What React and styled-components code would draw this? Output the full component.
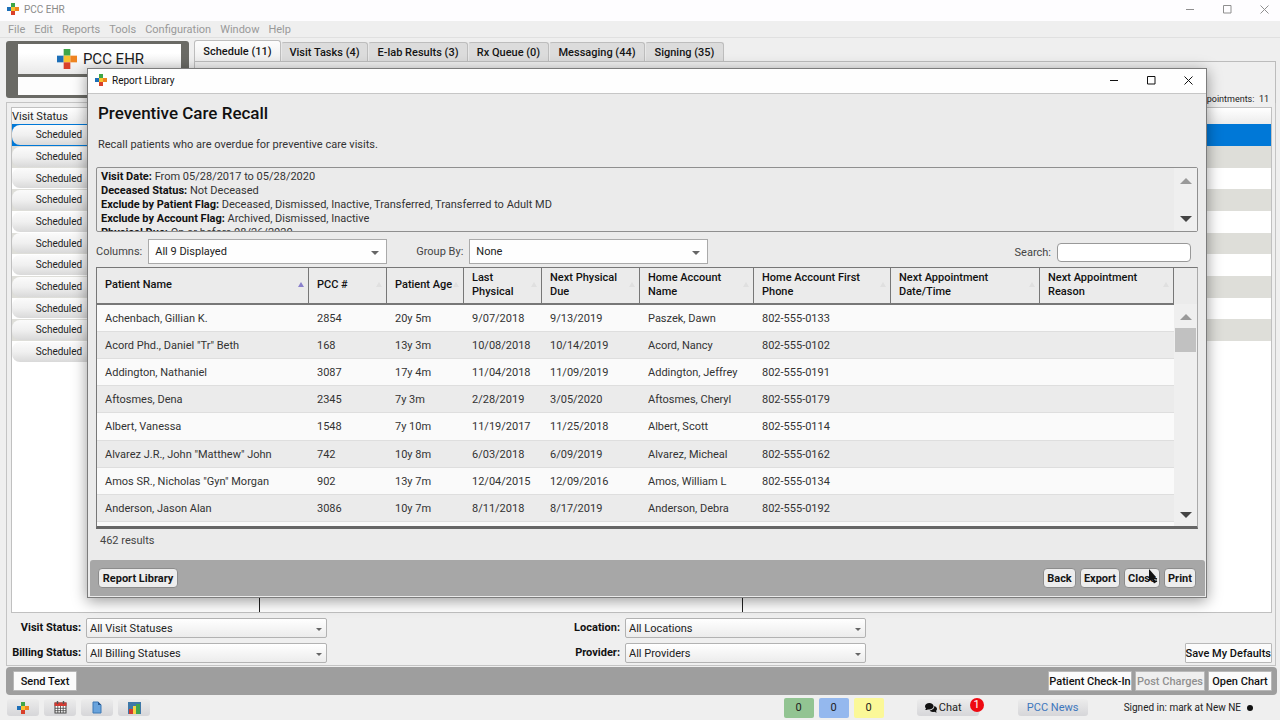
import React from "react";
import styled, { createGlobalStyle } from "styled-components";

const Global = createGlobalStyle`
  * { box-sizing: border-box; }
  body { margin: 0; background: #efefef; }
  body, button, input, select { font-family: Roboto, "Liberation Sans", sans-serif; font-size: 11px; color: #222; }
  button { cursor: default; }
  h1, p, dl, dt, dd { margin: 0; font-weight: inherit; }
`;

/* ---------- main window ---------- */
const Desktop = styled.div`
  position: relative;
  min-height: 100vh;
  display: flex;
  flex-direction: column;
  background: #efefef;
  overflow: hidden;
`;
const TitleBar = styled.header`
  display: flex;
  align-items: center;
  height: 21px;
  padding: 0 11px 3px 7px;
  gap: 5px;
  background: #fefdff;
  font-size: 10px;
  color: #8a8a8a;
`;
const WindowControls = styled.div`
  display: flex;
  align-items: center;
  gap: ${(p) => p.$gap}px;
  margin-left: auto;
`;
const ControlButton = styled.button`
  display: flex;
  padding: 0;
  border: 0;
  background: none;
  color: ${(p) => (p.$dim ? "#8f8f8f" : "#111")};
`;
const MenuBar = styled.nav`
  display: flex;
  align-items: flex-end;
  height: 17px;
  padding-left: 8px;
  gap: 9px;
  border-bottom: 1px solid #e0e0e0;
`;
const MenuItem = styled.button`
  padding: 0;
  border: 0;
  background: none;
  line-height: 14px;
  color: #999;
`;
const HeaderRow = styled.div`
  display: flex;
  height: 65px;
  padding: 0 4px 0 6px;
`;
const BrandColumn = styled.div`
  width: 188px;
  padding-top: 3px;
  border-bottom: 1px solid #c4c4c4;
`;
const BrandBox = styled.div`
  display: flex;
  flex-direction: column;
  gap: 3px;
  width: 183px;
  height: 57px;
  padding: 3px 8px 3px 12px;
  border-radius: 3px;
  background: #6a6a65;
`;
const BrandName = styled.div`
  display: flex;
  align-items: center;
  justify-content: center;
  gap: 6px;
  height: 30px;
  padding-left: 2px;
  font-size: 15px;
  color: #1c1c1c;
  background: linear-gradient(#fff 30%, #e9e9e9);
`;
const BrandField = styled.input`
  width: 100%;
  height: 18px;
  padding: 0 4px;
  border: 0;
  background: #fdfdfd;
`;
const TabColumn = styled.div`
  flex: 1;
  display: flex;
  flex-direction: column;
`;
const TabRow = styled.div`
  display: flex;
  align-items: flex-end;
  height: 23px;
`;
const Tab = styled.button`
  width: ${(p) => p.$width}px;
  height: ${(p) => (p.$active ? 21 : 19)}px;
  padding: 0;
  border: 1px solid #bdbdbd;
  border-bottom: 0;
  border-left-color: ${(p) => (p.$active ? "#bdbdbd" : "#e8e8e8")};
  border-radius: 3px 3px 0 0;
  background: ${(p) => (p.$active ? "linear-gradient(#fdfdfd, #efefef)" : "#dcdcdc")};
  font-weight: 500;
  color: #151515;
`;
const TabPane = styled.div`
  flex: 1;
  display: flex;
  align-items: flex-end;
  justify-content: flex-end;
  padding: 0 6px 0 0;
  border: 1px solid #bcbcbc;
  border-width: 1px 1px 0 1px;
  font-size: 9px;
  line-height: 8px;
  white-space: pre;
`;
const Frame = styled.main`
  flex: 1;
  display: flex;
  flex-direction: column;
  margin: 0 4px 0 6px;
  padding: 4px 3px 0 4px;
  border: 1px solid #c4c4c4;
  border-top: 0;
`;
const SchedulePanel = styled.div`
  flex: 1;
  display: flex;
  flex-direction: column;
  border: 1px solid #c0c0c0;
  background: #fff;
`;
const ScheduleTable = styled.table`
  width: 100%;
  border-collapse: collapse;
  th {
    height: 16px;
    padding: 0;
    text-align: left;
    font-size: 11px;
    font-weight: 400;
    line-height: 15px;
    background: linear-gradient(#fff, #ececec);
  }
  td { padding: 0 0 1px; height: 21px; }
  tbody tr:nth-child(3n + 1) td, tbody tr:nth-child(3n + 2) td { height: 22px; }
  tbody tr:nth-child(even) { background: #deded9; }
  tbody tr:first-child { background: #0078d7; }
`;
const StatusButton = styled.button`
  display: block;
  width: 94px;
  height: 20px;
  padding: 0;
  border: 0;
  border-radius: 8px 0 0 8px;
  background: linear-gradient(#fbfbfb, #f0f0f0 50%, #d9d9d9);
  font-size: 10px;
`;
const ScheduleColumns = styled.div`
  flex: 1;
  display: grid;
  grid-template-columns: 248px 483px 1fr;
  span { border-right: 1px solid #222; }
  span:last-child { border: 0; }
`;
const FilterGrid = styled.form`
  display: grid;
  grid-template-columns: 70px 241px 288px 241px 1fr;
  align-items: center;
  column-gap: 5px;
  row-gap: 5px;
  padding: 5px 0 2px;
`;
const FilterLabel = styled.label`
  text-align: right;
  font-weight: 700;
  line-height: 14px;
  color: #111;
  white-space: nowrap;
`;
const SelectBox = styled.span`
  position: relative;
  display: block;
  width: ${(p) => (p.$wide ? "239px" : "auto")};
  &::after {
    content: "";
    position: absolute;
    right: ${(p) => (p.$wide ? 8 : 5)}px;
    top: 50%;
    border: solid transparent;
    border-width: ${(p) => (p.$wide ? "4px 4px 0" : "3px 3px 0")};
    border-top-color: #666;
    pointer-events: none;
  }
`;
const Select = styled.select`
  display: block;
  appearance: none;
  width: 100%;
  height: 20px;
  padding: 0 20px 0 3px;
  border: 1px solid #b2b2b2;
  border-radius: 2px;
  background: linear-gradient(#fff, #ececec);
`;
const DialogSelect = styled(Select)`
  height: 25px;
  padding-left: 6px;
  border-radius: 0;
  border-color: #aaa;
  background: #fefefe;
`;
const FlatButton = styled.button`
  justify-self: end;
  min-width: ${(p) => p.$width}px;
  height: 20px;
  padding: 0;
  border: 1px solid #b8b8b8;
  border-radius: 1px;
  background: #fbfbfb;
  font-weight: 500;
  color: #111;
  white-space: nowrap;
  &:disabled { color: #909090; background: #efefef; }
`;
const ActionBar = styled.div`
  display: flex;
  align-items: center;
  gap: 3px;
  height: 28px;
  margin: 1px 3px 0 6px;
  padding: 0 5px 0 7px;
  border-radius: 4px;
  background: #9e9e9e;
`;
const Spacer = styled.span`
  flex: 1;
`;
const StatusBar = styled.footer`
  display: flex;
  align-items: center;
  height: 25px;
  padding: 0 27px 0 7px;
  gap: 5px;
`;
const ToolButton = styled.button`
  display: flex;
  align-items: center;
  justify-content: center;
  gap: 2px;
  width: ${(p) => p.$width}px;
  height: 17px;
  padding: 0;
  border: 0;
  border-radius: 3px;
  background: linear-gradient(#ececec, #d6d6d9);
  color: ${(p) => p.$color || "#222"};
`;
const Counter = styled.button`
  width: 30px;
  height: 20px;
  padding: 0;
  border: 0;
  border-radius: 2px;
  background: ${(p) => p.$color};
`;
const ChatSlot = styled.div`
  position: relative;
  margin: 0 34px 0 28px;
`;
const ChatButton = styled(ToolButton)`
  padding-right: 9px;
`;
const Badge = styled.span`
  position: absolute;
  right: -5px;
  top: -1px;
  width: 14px;
  height: 14px;
  border-radius: 7px;
  background: #ee0a12;
  color: #fff;
  line-height: 14px;
  text-align: center;
`;
const SignedIn = styled.span`
  display: flex;
  align-items: center;
  gap: 6px;
  margin-left: 31px;
  font-size: 10px;
  white-space: nowrap;
`;
const OnlineDot = styled.span`
  width: 6px;
  height: 6px;
  border-radius: 3px;
  background: #111;
`;

/* ---------- report window ---------- */
const ReportWindow = styled.section`
  position: absolute;
  left: 87px;
  right: 73px;
  top: 68px;
  border: 1px solid #7c7c7c;
  background: #ebebeb;
  box-shadow: 0 3px 14px rgba(0, 0, 0, 0.4);
`;
const ReportTitle = styled.header`
  display: flex;
  align-items: center;
  gap: 5px;
  height: 25px;
  padding: 0 13px 2px 7px;
  border-bottom: 1px solid #c6c6c6;
  background: #fefefe;
  font-size: 10px;
  color: #111;
`;
const ReportBody = styled.div`
  padding: 9px 8px 0;
`;
const Heading = styled.h1`
  padding-left: 2px;
  font-size: 17px;
  font-weight: 500;
  line-height: 20px;
  color: #111;
`;
const Intro = styled.p`
  padding: 14px 2px;
  line-height: 16px;
  color: #333;
`;
const Box = styled.div`
  display: flex;
  border: 1px solid #8f8f8f;
`;
const Criteria = styled(Box)`
  height: 65px;
  border-radius: 2px;
`;
const CriteriaList = styled.dl`
  flex: 1;
  height: 63px;
  padding: 2px 4px;
  overflow: hidden;
  line-height: 14px;
  color: #333;
  dt { display: inline; font-weight: 700; color: #111; }
  dd { display: inline; }
`;
const ScrollRail = styled.div`
  display: flex;
  flex-direction: column;
  align-items: center;
  width: 23px;
  padding: 10px 0 ${(p) => p.$bottom}px;
  background: #efefef;
`;
const Arrow = styled.button`
  width: 0;
  height: 0;
  padding: 0;
  border: solid transparent;
  ${(p) =>
    p.$down
      ? "border-width: 6px 6px 0; border-top-color: #444; margin-top: auto;"
      : "border-width: 0 6px 6px; border-bottom-color: #999;"}
  background: none;
`;
const Thumb = styled.div`
  width: 21px;
  height: 24px;
  margin-top: 8px;
  background: #c1c1c1;
`;
const Controls = styled.div`
  display: flex;
  align-items: center;
  height: 35px;
  padding: 3px 7px 0 0;
  color: #444;
`;
const ControlLabel = styled.label`
  margin-right: 6px;
`;
const Gap = styled.span`
  width: 29px;
`;
const SearchGroup = styled.div`
  display: flex;
  align-items: center;
  margin: 3px 0 0 auto;
`;
const Search = styled.input`
  width: 134px;
  height: 19px;
  padding: 0 5px;
  border: 1px solid #999;
  border-radius: 4px;
  background: #fff;
`;
const Results = styled(Box)`
  height: 262px;
  border-color: #777 #aaa #666 #777;
  border-bottom-width: 3px;
`;
const ResultsClip = styled.div`
  flex: 1;
  height: 258px;
  overflow: hidden;
`;
const ResultsTable = styled.table`
  width: 100%;
  table-layout: fixed;
  border-collapse: separate;
  border-spacing: 0;
  tbody tr:nth-child(odd) { background: #fafafa; }
  tbody tr:nth-child(5n) td { height: 28px; }
  td {
    height: 27px;
    padding: 0 8px;
    border-bottom: 1px solid #dedede;
    white-space: nowrap;
    font-size: 11px;
    color: #333;
  }
`;
const HeadCell = styled.th`
  height: 37px;
  padding: 0 8px 2px;
  border-right: 1px solid #777;
  border-bottom: 2px solid #777;
  text-align: left;
  font-size: 11px;
  font-weight: 500;
  line-height: 14px;
  color: #111;
`;
const HeadContent = styled.div`
  display: flex;
  align-items: center;
  justify-content: space-between;
  margin-right: -4px;
  white-space: pre;
`;
const SortMark = styled.i`
  width: 0;
  height: 0;
  border: solid transparent;
  border-width: 0 3px 5px;
  border-bottom-color: ${(p) => (p.$active ? "#8a80cc" : "#e0e0e0")};
`;
const RailColumn = styled.div`
  display: flex;
  flex-direction: column;
  width: 23px;
  padding-top: 36px;
  ${ScrollRail} { flex: 1; }
`;
const ResultCount = styled.p`
  padding: 4px 4px 11px;
  line-height: 16px;
  color: #444;
`;
const ReportFooter = styled.footer`
  display: flex;
  align-items: center;
  gap: 4px;
  height: 36px;
  margin: 0 1px 1px 2px;
  padding: 0 9px 0 8px;
  border-radius: 3px 3px 0 0;
  background: #a7a7a7;
`;
const ReportButton = styled.button`
  min-width: ${(p) => p.$width}px;
  height: 20px;
  padding: 0;
  border: 1px solid #8c8c8c;
  border-radius: 4px;
  background: #ededed;
  font-weight: 700;
  color: #151515;
  white-space: nowrap;
`;
const Pointer = styled.svg`
  position: absolute;
  right: 48px;
  bottom: 12px;
`;

const Logo = ({ size }) => (
  <svg width={size} height={size} viewBox="0 0 18 18" aria-hidden="true">
    <rect x="6" y="0" width="6" height="6" fill="#3fa648" />
    <rect x="0" y="6" width="6" height="6" fill="#1d6fb8" />
    <rect x="6" y="6" width="6" height="6" fill="#f9c22e" />
    <rect x="12" y="6" width="6" height="6" fill="#ee8420" />
    <rect x="6" y="12" width="6" height="6" fill="#d9402b" />
  </svg>
);

const WindowIcons = ({ dim, gap }) => (
  <WindowControls $gap={gap}>
    <ControlButton $dim={dim} aria-label="Minimize">
      <svg width="9" height="9" viewBox="0 0 9 9"><path d="M0 4.5h8" stroke="currentColor" /></svg>
    </ControlButton>
    <ControlButton $dim={dim} aria-label="Maximize">
      <svg width="9" height="9" viewBox="0 0 9 9"><path d="M.5 .5h7.500v7.500h-7.500z" fill="none" stroke="currentColor" /></svg>
    </ControlButton>
    <ControlButton $dim={dim} aria-label="Close">
      <svg width="9" height="9" viewBox="0 0 9 9"><path d="M.5 .5l8 8M8.500 .5l-8 8" stroke="currentColor" /></svg>
    </ControlButton>
  </WindowControls>
);

const CalendarIcon = () => (
  <svg width="13" height="13" viewBox="0 0 13 13" aria-hidden="true">
    <rect x="1" y="2" width="11" height="10" fill="#fff" stroke="#444" />
    <rect x=".5" y="1.500" width="12" height="3.500" fill="#d23a32" />
    <path d="M3.500 0v3M9.500 0v3" stroke="#555" strokeWidth="1.400" />
    <path d="M1 7.300h11M1 9.700h11M3.800 5v7M6.500 5v7M9.200 5v7" stroke="#444" strokeWidth=".8" />
  </svg>
);
const PageIcon = () => (
  <svg width="10" height="13" viewBox="0 0 10 13" aria-hidden="true">
    <path d="M1 1h5l3 3v8H1z" fill="#69a3dc" stroke="#3d78b5" />
    <path d="M6 .5V4h3.500z" fill="#2c5c94" />
  </svg>
);
const ChartIcon = () => (
  <svg width="13" height="12" viewBox="0 0 13 12" aria-hidden="true">
    <rect width="13" height="12" fill="#3e78a8" />
    <rect x="1" y="7" width="4" height="5" fill="#d13c30" />
    <rect x="5" y="4" width="3" height="8" fill="#f5d547" />
    <rect x="8" y="2" width="4" height="10" fill="#3da352" />
  </svg>
);
const ChatIcon = () => (
  <svg width="12" height="10" viewBox="0 0 12 10" aria-hidden="true">
    <path d="M4.300 0C1.900 0 0 1.500 0 3.300c0 .8.400 1.500 1 2.100L.2 7.100c1 0 1.900-.3 2.600-.7 3 .6 5.800-.9 5.800-3.100C8.600 1.500 6.700 0 4.300 0z" fill="#111" />
    <path d="M9.300 3c.2 2.400-2 4.300-4.700 4.500.8 1.100 2.700 1.700 4.600 1.200.7.500 1.600.8 2.600.8L11 8c.6-.5 1-1.100 1-1.900C12 4.700 10.900 3.500 9.300 3z" fill="#111" />
  </svg>
);

const TABS = [
  ["Schedule (11)", 87],
  ["Visit Tasks (4)", 87],
  ["E-lab Results (3)", 100],
  ["Rx Queue (0)", 81],
  ["Messaging (44)", 96],
  ["Signing (35)", 79],
];

const COLUMNS = [
  ["Patient Name", 212],
  ["PCC #", 78],
  ["Patient Age", 77],
  ["Last\nPhysical", 78],
  ["Next Physical\nDue", 98],
  ["Home Account\nName", 114],
  ["Home Account First\nPhone", 137],
  ["Next Appointment\nDate/Time", 149],
  ["Next Appointment\nReason"],
];

const PATIENTS = [
  ["Achenbach, Gillian K.", "2854", "20y 5m", "9/07/2018", "9/13/2019", "Paszek, Dawn", "802-555-0133"],
  ['Acord Phd., Daniel "Tr" Beth', "168", "13y 3m", "10/08/2018", "10/14/2019", "Acord, Nancy", "802-555-0102"],
  ["Addington, Nathaniel", "3087", "17y 4m", "11/04/2018", "11/09/2019", "Addington, Jeffrey", "802-555-0191"],
  ["Aftosmes, Dena", "2345", "7y 3m", "2/28/2019", "3/05/2020", "Aftosmes, Cheryl", "802-555-0179"],
  ["Albert, Vanessa", "1548", "7y 10m", "11/19/2017", "11/25/2018", "Albert, Scott", "802-555-0114"],
  ['Alvarez J.R., John "Matthew" John', "742", "10y 8m", "6/03/2018", "6/09/2019", "Alvarez, Micheal", "802-555-0162"],
  ['Amos SR., Nicholas "Gyn" Morgan', "902", "13y 7m", "12/04/2015", "12/09/2016", "Amos, William L", "802-555-0134"],
  ["Anderson, Jason Alan", "3086", "10y 7m", "8/11/2018", "8/17/2019", "Anderson, Debra", "802-555-0192"],
  ["", "", "", "", "", "", ""],
];

const CRITERIA = [
  ["Visit Date:", "From 05/28/2017 to 05/28/2020"],
  ["Deceased Status:", "Not Deceased"],
  ["Exclude by Patient Flag:", "Deceased, Dismissed, Inactive, Transferred, Transferred to Adult MD"],
  ["Exclude by Account Flag:", "Archived, Dismissed, Inactive"],
  ["Physical Due:", "On or before 08/26/2020"],
];

const Filter = ({ id, label, value }) => (
  <>
    <FilterLabel htmlFor={id}>{label}</FilterLabel>
    <SelectBox>
      <Select id={id}><option>{value}</option></Select>
    </SelectBox>
  </>
);

const Report = () => (
  <ReportWindow aria-label="Report Library">
    <ReportTitle>
      <Logo size={12} />
      Report Library
      <WindowIcons gap={28} />
    </ReportTitle>
    <ReportBody>
      <Heading>Preventive Care Recall</Heading>
      <Intro>Recall patients who are overdue for preventive care visits.</Intro>
      <Criteria>
        <CriteriaList>
          {CRITERIA.map(([term, text]) => (
            <div key={term}><dt>{term}</dt> <dd>{text}</dd></div>
          ))}
        </CriteriaList>
        <ScrollRail $bottom={9}>
          <Arrow aria-label="Scroll up" />
          <Arrow $down aria-label="Scroll down" />
        </ScrollRail>
      </Criteria>
      <Controls>
        <ControlLabel htmlFor="columns">Columns:</ControlLabel>
        <SelectBox $wide>
          <DialogSelect id="columns"><option>All 9 Displayed</option></DialogSelect>
        </SelectBox>
        <Gap />
        <ControlLabel htmlFor="group">Group By:</ControlLabel>
        <SelectBox $wide>
          <DialogSelect id="group"><option>None</option></DialogSelect>
        </SelectBox>
        <SearchGroup>
          <ControlLabel htmlFor="search">Search:</ControlLabel>
          <Search id="search" />
        </SearchGroup>
      </Controls>
      <Results>
        <ResultsClip>
          <ResultsTable>
            <colgroup>
              {COLUMNS.map(([name, width]) => <col key={name} width={width} />)}
            </colgroup>
            <thead>
              <tr>
                {COLUMNS.map(([name], i) => (
                  <HeadCell key={name} scope="col">
                    <HeadContent>{name}<SortMark $active={i === 0} /></HeadContent>
                  </HeadCell>
                ))}
              </tr>
            </thead>
            <tbody>
              {PATIENTS.map((row, r) => (
                <tr key={r}>
                  {row.map((cell, i) => <td key={i}>{cell}</td>)}
                  <td /><td />
                </tr>
              ))}
            </tbody>
          </ResultsTable>
        </ResultsClip>
        <RailColumn>
          <ScrollRail $bottom={8}>
            <Arrow aria-label="Scroll up" />
            <Thumb />
            <Arrow $down aria-label="Scroll down" />
          </ScrollRail>
        </RailColumn>
      </Results>
      <ResultCount>462 results</ResultCount>
    </ReportBody>
    <ReportFooter>
      <ReportButton $width={80}>Report Library</ReportButton>
      <Spacer />
      <ReportButton $width={33}>Back</ReportButton>
      <ReportButton $width={40}>Export</ReportButton>
      <ReportButton $width={36}>Close</ReportButton>
      <ReportButton $width={32}>Print</ReportButton>
    </ReportFooter>
    <Pointer width="10" height="16" viewBox="0 0 10 16" aria-hidden="true">
      <path d="M1 0l7 8-2.500 1 2.500 4-2 1.500-2-4L1 12z" fill="#111" />
      <path d="M5 9l4 1M6 13l3-1" stroke="#111" strokeWidth="1.500" />
    </Pointer>
  </ReportWindow>
);

export default function App() {
  return (
    <Desktop>
      <Global />
      <TitleBar>
        <Logo size={12} />
        PCC EHR
        <WindowIcons dim gap={28} />
      </TitleBar>
      <MenuBar>
        {["File", "Edit", "Reports", "Tools", "Configuration", "Window", "Help"].map((m) => (
          <MenuItem key={m}>{m}</MenuItem>
        ))}
      </MenuBar>
      <HeaderRow>
        <BrandColumn>
          <BrandBox>
            <BrandName><Logo size={20} />PCC EHR</BrandName>
            <BrandField aria-label="Find patient" />
          </BrandBox>
        </BrandColumn>
        <TabColumn>
          <TabRow role="tablist">
            {TABS.map(([name, width], i) => (
              <Tab key={name} role="tab" aria-selected={i === 0} $active={i === 0} $width={width}>{name}</Tab>
            ))}
          </TabRow>
          <TabPane>{"Appointments:  11"}</TabPane>
        </TabColumn>
      </HeaderRow>
      <Frame>
        <SchedulePanel>
          <ScheduleTable>
            <thead><tr><th scope="col">Visit Status</th></tr></thead>
            <tbody>
              {Array.from({ length: 11 }, (_, i) => (
                <tr key={i}><td><StatusButton>Scheduled</StatusButton></td></tr>
              ))}
            </tbody>
          </ScheduleTable>
          <ScheduleColumns><span /><span /><span /></ScheduleColumns>
        </SchedulePanel>
        <FilterGrid onSubmit={(e) => e.preventDefault()}>
          <Filter id="visit" label="Visit Status:" value="All Visit Statuses" />
          <Filter id="location" label="Location:" value="All Locations" />
          <span />
          <Filter id="billing" label="Billing Status:" value="All Billing Statuses" />
          <Filter id="provider" label="Provider:" value="All Providers" />
          <FlatButton $width={87}>Save My Defaults</FlatButton>
        </FilterGrid>
      </Frame>
      <ActionBar>
        <FlatButton $width={64}>Send Text</FlatButton>
        <Spacer />
        <FlatButton $width={84}>Patient Check-In</FlatButton>
        <FlatButton $width={70} disabled>Post Charges</FlatButton>
        <FlatButton $width={64}>Open Chart</FlatButton>
      </ActionBar>
      <StatusBar>
        <ToolButton $width={32} aria-label="Home"><Logo size={12} /></ToolButton>
        <ToolButton $width={32} aria-label="Calendar"><CalendarIcon /></ToolButton>
        <ToolButton $width={32} aria-label="Documents"><PageIcon /></ToolButton>
        <ToolButton $width={32} aria-label="Reports"><ChartIcon /></ToolButton>
        <Spacer />
        <Counter $color="#92c492">0</Counter>
        <Counter $color="#94b8ee">0</Counter>
        <Counter $color="#fbf898">0</Counter>
        <ChatSlot>
          <ChatButton $width={62}><ChatIcon />Chat</ChatButton>
          <Badge>1</Badge>
        </ChatSlot>
        <ToolButton $width={70} $color="#3d77bd">PCC News</ToolButton>
        <SignedIn>Signed in: mark at New NE <OnlineDot /></SignedIn>
      </StatusBar>
      <Report />
    </Desktop>
  );
}
